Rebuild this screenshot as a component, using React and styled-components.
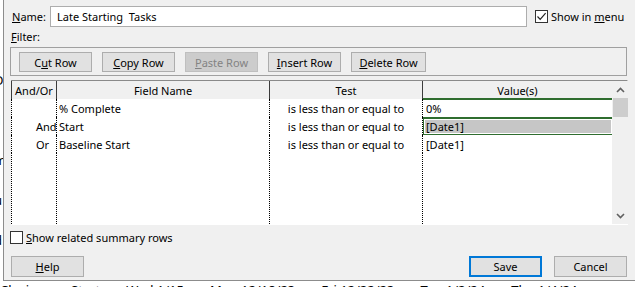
import React from "react";
import styled, { createGlobalStyle } from "styled-components";

const GlobalStyle = createGlobalStyle`
  html, body {
    margin: 0;
    padding: 0;
    background: #fff;
  }
  body {
    font-family: "Noto Sans", "Liberation Sans", sans-serif;
    font-size: 11px;
    color: #000;
  }
`;

const Page = styled.div`
  position: relative;
  width: 635px;
  height: 287px;
  overflow: hidden;
  background: #fff;
`;

/* the project sheet that sits behind the dialog */
const Sheet = styled.div`
  display: flex;
  flex-direction: column;
  padding-top: 60px;
`;

const SheetRow = styled.div`
  height: 40px;
  display: flex;
  align-items: center;
  margin-left: -6px;
  color: ${(p) => p.$color || "#000"};
  font-size: 13px;
`;

const SheetFooter = styled.div`
  display: flex;
  gap: 26px;
  margin-top: 21px;
  font-size: 13px;
  line-height: 18px;
  white-space: nowrap;
`;

const Dialog = styled.div`
  position: absolute;
  left: 3px;
  top: 0;
  right: 0;
  height: 281px;
  box-sizing: border-box;
  background: #f0f0f0;
  border-left: 1px solid #8c8c8c;
  border-bottom: 1px solid #8c8c8c;
  padding: 6px 7px 0 6px;
  display: flex;
  flex-direction: column;
`;

const NameRow = styled.div`
  display: flex;
  align-items: center;
  height: 21px;
`;

const FieldLabel = styled.span`
  width: 38px;
  flex-shrink: 0;
  padding-left: 2px;
`;

const TextBox = styled.input`
  width: 477px;
  flex-shrink: 0;
  height: 21px;
  box-sizing: border-box;
  margin: 0;
  border: 1px solid #adadad;
  background: #fff;
  padding: 0 6px;
  font: inherit;
  color: #000;
  outline: none;
`;

const CheckLabel = styled.label`
  display: flex;
  align-items: center;
  gap: 3px;
  white-space: nowrap;
  margin-left: ${(p) => p.$offset || 0}px;
`;

const Box = styled.span`
  width: 13px;
  height: 13px;
  flex-shrink: 0;
  box-sizing: border-box;
  border: 1px solid #333;
  background: #fff;
  display: flex;
  align-items: center;
  justify-content: center;
`;

const FilterLabel = styled.div`
  height: 16px;
  line-height: 16px;
  margin-top: 2px;
  padding-left: 1px;
`;

const GroupBox = styled.div`
  margin: 2px 1px 0 0;
  border: 1px solid #a0a0a0;
  padding: 4px 8px 3px 8px;
  display: flex;
  gap: 10px;
`;

const Button = styled.div`
  width: ${(p) => p.$w || 73}px;
  height: ${(p) => p.$h || 20}px;
  box-sizing: border-box;
  display: flex;
  align-items: center;
  justify-content: center;
  white-space: nowrap;
  background: ${(p) => (p.$disabled ? "#cccccc" : "#e1e1e1")};
  border: ${(p) =>
    p.$default ? "2px solid #0078d7" : p.$disabled ? "1px solid #bfbfbf" : "1px solid #adadad"};
  color: ${(p) => (p.$disabled ? "#838383" : "#000")};
`;

const Table = styled.div`
  margin: 4px 0 0 1px;
  height: 145px;
  box-sizing: border-box;
  display: flex;
  border-top: 1px solid #8a8a8a;
  border-right: 1px solid #fff;
  border-bottom: 1px solid #fff;
`;

const Grid = styled.div`
  flex: 1;
  display: flex;
  flex-direction: column;
  background: #fff;
`;

const HeadRow = styled.div`
  display: flex;
  height: 18px;
  background: #f0f0f0;
  border-left: 1px solid #3c3c3c;
`;

const HeadCell = styled.div`
  position: relative;
  width: ${(p) => p.$w}px;
  box-sizing: border-box;
  border-right: ${(p) => (p.$last ? "none" : "1px solid #3c3c3c")};
  display: flex;
  align-items: center;
  justify-content: center;
  ${(p) =>
    p.$active &&
    `
    &::after {
      content: "";
      position: absolute;
      left: 0;
      right: 0;
      bottom: -1px;
      height: 2px;
      background: #2f6d2f;
      z-index: 1;
    }
  `}
`;

const BodyRow = styled.div`
  display: flex;
  height: ${(p) => (p.$fill ? "auto" : "18px")};
  flex: ${(p) => (p.$fill ? 1 : "none")};
  border-left: 1px dotted #000;
`;

const Cell = styled.div`
  position: relative;
  width: ${(p) => p.$w}px;
  box-sizing: border-box;
  border-right: ${(p) => (p.$last ? "none" : "1px dotted #000")};
  display: flex;
  align-items: center;
  justify-content: ${(p) => p.$align || "flex-start"};
  padding-left: ${(p) => p.$pad || 0}px;
  overflow: hidden;
  white-space: nowrap;
`;

const RowMark = styled.span`
  position: absolute;
  left: -1px;
  top: 0;
  bottom: 0;
  width: 1px;
  background: #2f8a2f;
`;

const SelectFrame = styled.div`
  position: absolute;
  left: -1px;
  top: 0;
  right: 0;
  bottom: -1px;
  border: 2px solid #2f6d2f;
  border-right: none;
  padding: 1px;
  display: flex;
`;

const SelectFill = styled.div`
  flex: 1;
  background: #c6c6c6;
  display: flex;
  align-items: center;
  padding-left: 1px;
`;

const ScrollBar = styled.div`
  width: 17px;
  background: #f0f0f0;
  display: flex;
  flex-direction: column;
  align-items: center;
`;

const Arrow = styled.div`
  height: 17px;
  width: 17px;
  display: flex;
  align-items: center;
  justify-content: center;
`;

const Thumb = styled.div`
  width: 15px;
  height: 19px;
  background: #cdcdcd;
`;

const Track = styled.div`
  flex: 1;
`;

const SummaryRow = styled.div`
  margin-top: 5px;
  height: 14px;
  display: flex;
  align-items: center;
`;

const Footer = styled.div`
  margin: 12px 1px 0 1px;
  display: flex;
  align-items: center;
  gap: 12px;
`;

const Spacer = styled.div`
  flex: 1;
`;

const cols = [
  { key: "andor", w: 45, title: "And/Or" },
  { key: "field", w: 213, title: "Field Name" },
  { key: "test", w: 153, title: "Test" },
  { key: "value", w: 189, title: "Value(s)" },
];

const rows = [
  { andor: "", field: "% Complete", test: "is less than or equal to", value: "0%" },
  { andor: "And", field: "Start", test: "is less than or equal to", value: "[Date1]", selected: true },
  { andor: "Or", field: "Baseline Start", test: "is less than or equal to", value: "[Date1]" },
];

const Check = () => (
  <svg width="11" height="11" viewBox="0 0 11 11">
    <polyline points="1.5,5.5 4.2,8.3 9.6,2.2" fill="none" stroke="#222" strokeWidth="1.2" />
  </svg>
);

const Chevron = ({ down }) => (
  <svg width="9" height="6" viewBox="0 0 9 6">
    <polyline
      points={down ? "1,1 4.5,4.5 8,1" : "1,5 4.5,1.5 8,5"}
      fill="none"
      stroke="#606060"
      strokeWidth="1.6"
    />
  </svg>
);

const renderCell = (row, col, i) => {
  const last = i === cols.length - 1;
  if (col.key === "andor") {
    return (
      <Cell key={col.key} $w={col.w} $pad={24}>
        {row.selected && <RowMark />}
        {row.andor}
      </Cell>
    );
  }
  if (col.key === "field") {
    return (
      <Cell key={col.key} $w={col.w} $pad={2}>
        {row.field}
      </Cell>
    );
  }
  if (col.key === "test") {
    return (
      <Cell key={col.key} $w={col.w} $align="center">
        {row.test}
      </Cell>
    );
  }
  return (
    <Cell key={col.key} $w={col.w} $pad={3} $last={last}>
      {row.selected ? (
        <SelectFrame>
          <SelectFill>{row.value}</SelectFill>
        </SelectFrame>
      ) : (
        row.value
      )}
    </Cell>
  );
};

export default function App() {
  return (
    <Page>
      <GlobalStyle />
      <Sheet>
        <SheetRow>D</SheetRow>
        <SheetRow $color="#1f5fbf">ll</SheetRow>
        <SheetRow>m</SheetRow>
        <SheetRow>u</SheetRow>
        <SheetRow>d</SheetRow>
        <SheetFooter>
          <span>Closing</span>
          <span>Start</span>
          <span>Wed 1/15</span>
          <span>Mon 12/18/23</span>
          <span>Fri 12/22/23</span>
          <span>Tue 1/2/24</span>
          <span>Thu 1/4/24</span>
        </SheetFooter>
      </Sheet>

      <Dialog>
        <NameRow>
          <FieldLabel>
            <u>N</u>ame:
          </FieldLabel>
          <TextBox readOnly defaultValue="Late Starting  Tasks" />
          <CheckLabel $offset={8}>
            <Box>
              <Check />
            </Box>
            <span>
              Show in <u>m</u>enu
            </span>
          </CheckLabel>
        </NameRow>

        <FilterLabel>
          <u>F</u>ilter:
        </FilterLabel>

        <GroupBox>
          <Button>
            <span>
              C<u>u</u>t Row
            </span>
          </Button>
          <Button>
            <span>
              <u>C</u>opy Row
            </span>
          </Button>
          <Button $disabled>
            <span>
              <u>P</u>aste Row
            </span>
          </Button>
          <Button>
            <span>
              <u>I</u>nsert Row
            </span>
          </Button>
          <Button $w={75}>
            <span>
              <u>D</u>elete Row
            </span>
          </Button>
        </GroupBox>

        <Table>
          <Grid>
            <HeadRow>
              {cols.map((c, i) => (
                <HeadCell key={c.key} $w={c.w} $last={i === cols.length - 1} $active={c.key === "value"}>
                  {c.title}
                </HeadCell>
              ))}
            </HeadRow>
            {rows.map((r, ri) => (
              <BodyRow key={ri}>{cols.map((c, i) => renderCell(r, c, i))}</BodyRow>
            ))}
            <BodyRow $fill>
              {cols.map((c, i) => (
                <Cell key={c.key} $w={c.w} $last={i === cols.length - 1} />
              ))}
            </BodyRow>
          </Grid>
          <ScrollBar>
            <Arrow>
              <Chevron />
            </Arrow>
            <Thumb />
            <Track />
            <Arrow>
              <Chevron down />
            </Arrow>
          </ScrollBar>
        </Table>

        <SummaryRow>
          <CheckLabel>
            <Box />
            <span>
              <u>S</u>how related summary rows
            </span>
          </CheckLabel>
        </SummaryRow>

        <Footer>
          <Button $h={21}>
            <span>
              <u>H</u>elp
            </span>
          </Button>
          <Spacer />
          <Button $h={21} $default>
            Save
          </Button>
          <Button $h={21}>Cancel</Button>
        </Footer>
      </Dialog>
    </Page>
  );
}
